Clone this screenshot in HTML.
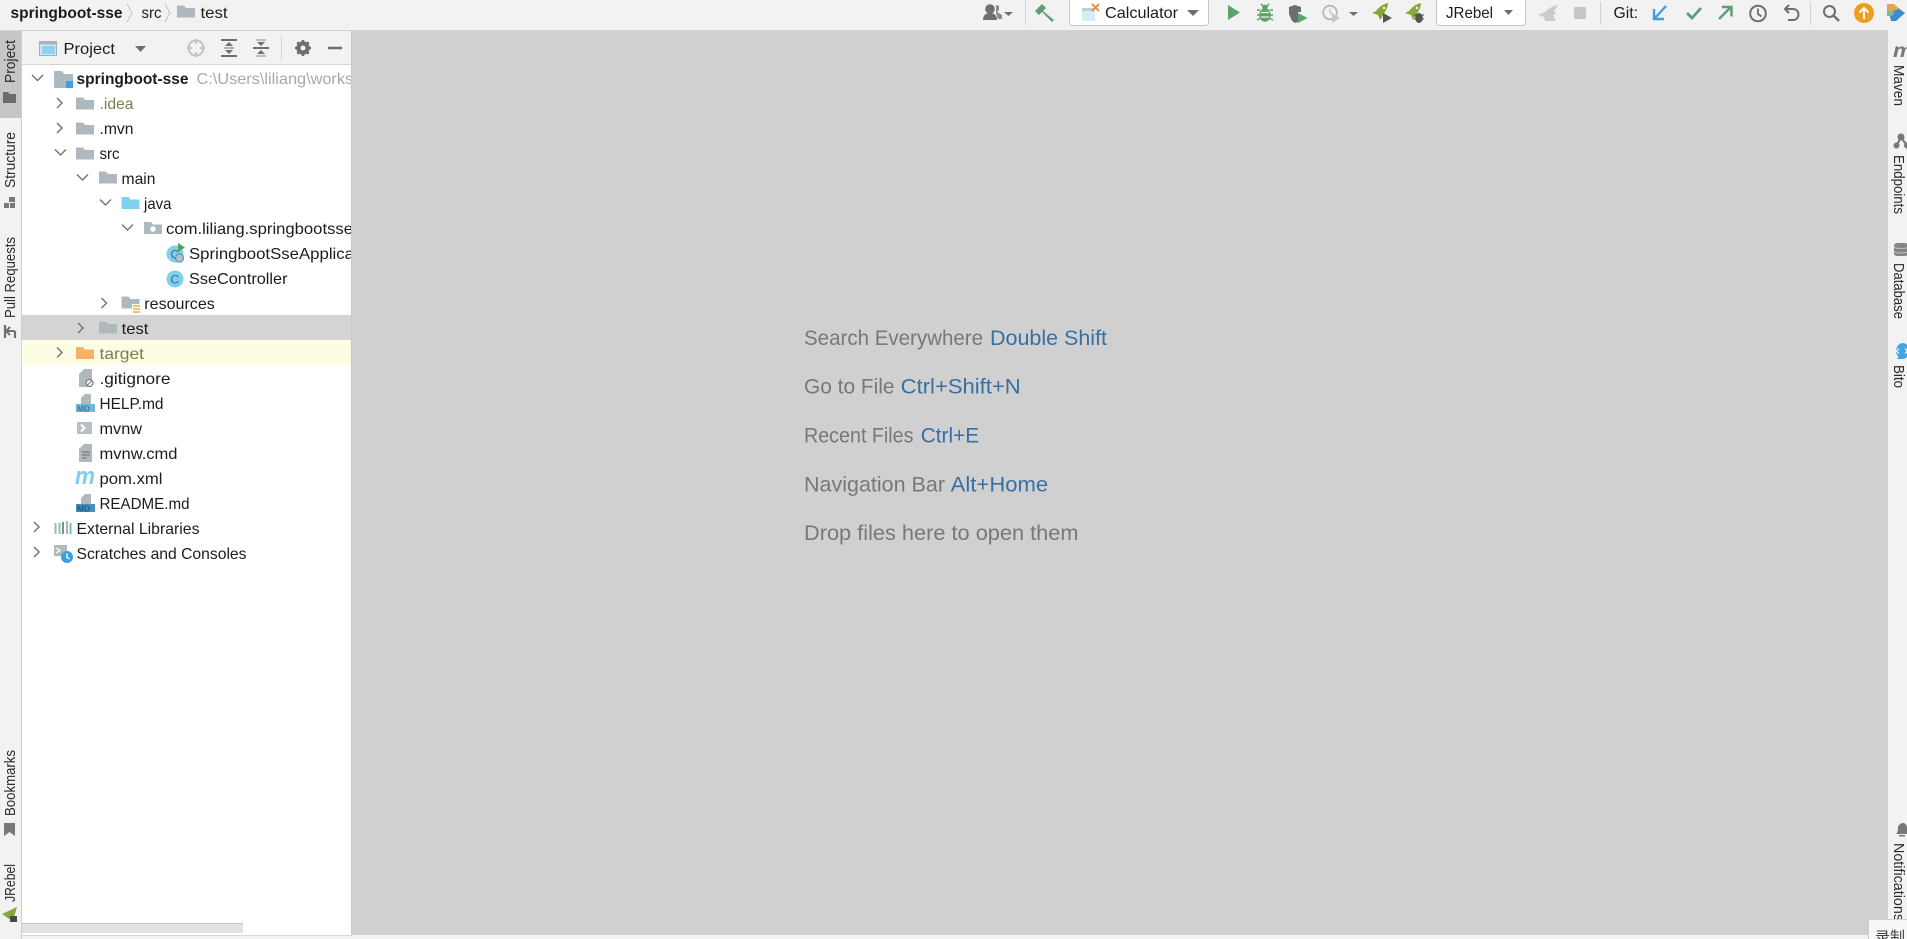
<!DOCTYPE html>
<html lang="en"><head><meta charset="utf-8"><title>springboot-sse</title>
<style>
html,body{margin:0;padding:0;background:#f2f2f2;overflow:hidden;width:1907px;height:939px}
svg{display:block}
text{font-family:"Liberation Sans","Noto Sans CJK SC",sans-serif;font-size:16px;fill:#1c1c1c}
.w{font-size:21px;fill:#787878}.b{font-size:21px;fill:#3a6fa3}
.r{font-size:14.5px;fill:#2a2a2a}
</style></head><body>
<svg width="1907" height="939" viewBox="0 0 1907 939" xmlns="http://www.w3.org/2000/svg">
<defs>
<clipPath id="pc"><rect x="22" y="66" width="329" height="860"/></clipPath>
<path id="f" d="M0 0h7l2 2.500h9v9.500H0z"/>
<path id="dn" d="M0 0l5.500 5.500L11 0" fill="none" stroke="#777" stroke-width="1.500"/>
<path id="rt" d="M0 0l5 5-5 5" fill="none" stroke="#777" stroke-width="1.500"/>
</defs>
<rect width="1907" height="939" fill="#f2f2f2"/>
<!-- editor -->
<rect x="352" y="31" width="1536" height="908" fill="#d0d0d0"/>
<rect x="0" y="30" width="1888" height="1" fill="#d2d2d2"/>
<!-- panel -->
<rect x="22" y="31" width="329" height="904" fill="#fff"/>
<rect x="22" y="31" width="329" height="34" fill="#f2f2f2"/>
<rect x="22" y="64" width="329" height="1" fill="#d4d4d4"/>
<rect x="21" y="31" width="1" height="908" fill="#cfcfcf"/>
<rect x="351" y="31" width="1" height="908" fill="#c8c8c8"/>
<rect x="0" y="31" width="21" height="87" fill="#c6c6c6"/>
<rect x="22" y="315" width="329" height="25" fill="#d4d4d4"/>
<rect x="22" y="340" width="329" height="25" fill="#fdfce4"/>
<rect x="22" y="923" width="221" height="10" fill="#e2e2e2"/>
<rect x="22" y="923" width="221" height="1" fill="#c9c9c9"/>
<rect x="22" y="935" width="1866" height="4" fill="#f2f2f2"/>
<rect x="22" y="935" width="330" height="1" fill="#d8d8d8"/>

<!-- breadcrumbs -->
<text x="10.500" y="18" textLength="112" lengthAdjust="spacingAndGlyphs" font-weight="700">springboot-sse</text>
<path d="M127 4l5 9-5 9" fill="none" stroke="#c4c4c4"/>
<text x="141.500" y="18" textLength="20" lengthAdjust="spacingAndGlyphs">src</text>
<path d="M165 4l5 9-5 9" fill="none" stroke="#c4c4c4"/>
<use href="#f" x="177" y="5.500" fill="#aeb8bf"/>
<text x="200.500" y="18" textLength="27" lengthAdjust="spacingAndGlyphs">test</text>

<!-- project header -->
<rect x="39.500" y="41.500" width="17" height="14" fill="#cfe8f4" stroke="#9fb0b8"/><rect x="39.500" y="41.500" width="17" height="3" fill="#aab5bb"/><rect x="42" y="46" width="13" height="8" fill="#8fd0ee"/>
<text x="63.500" y="54" textLength="51.500" lengthAdjust="spacingAndGlyphs">Project</text>
<path d="M135 46h11l-5.500 6z" fill="#6e6e6e"/>
<circle cx="196" cy="48" r="7.500" fill="none" stroke="#c4c4c4" stroke-width="2"/><path d="M196 39v5M196 52v5M187 48h5M200 48h5" stroke="#c4c4c4" stroke-width="2"/>
<path d="M221 40h16M221 56h16" stroke="#6e6e6e" stroke-width="2"/><path d="M229 42l-4 4h8zM229 54l-4-4h8z" fill="#6e6e6e"/><path d="M224 48h10" stroke="#6e6e6e"/>
<path d="M253 48h16" stroke="#6e6e6e" stroke-width="2"/><path d="M261 46l-4-4h8zM261 50l-4 4h8z" fill="#6e6e6e"/><path d="M256 40h10M256 56h10" stroke="#8a8a8a"/>
<rect x="281" y="36" width="1" height="24" fill="#d4d4d4"/>
<circle cx="303" cy="48" r="5" fill="none" stroke="#6e6e6e" stroke-width="3.500"/><path d="M303 40v16M295 48h16M297.300 42.300l11.400 11.400M308.700 42.300l-11.400 11.400" stroke="#6e6e6e" stroke-width="2.500"/><circle cx="303" cy="48" r="2.500" fill="#f2f2f2"/>
<path d="M328 48h14" stroke="#6e6e6e" stroke-width="2.500"/>

<!-- tree -->
<g clip-path="url(#pc)">
<use href="#dn" x="32" y="75"/>
<path d="M54 71h8l2 3h9v7h-7v7H54z" fill="#aeb8bf"/><rect x="66" y="81" width="7" height="7" fill="#3d9fe0"/>
<text x="76.500" y="84" textLength="112" lengthAdjust="spacingAndGlyphs" font-weight="700">springboot-sse</text>
<text x="196.500" y="84" textLength="192" lengthAdjust="spacingAndGlyphs" style="fill:#a8a8a8">C:\Users\liliang\workspace</text>

<use href="#rt" x="57" y="98"/><use href="#f" x="76" y="97.500" fill="#aeb8bf"/><text x="99.500" y="109" textLength="34" lengthAdjust="spacingAndGlyphs" style="fill:#7d7d4e">.idea</text>
<use href="#rt" x="57" y="123"/><use href="#f" x="76" y="122.500" fill="#aeb8bf"/><text x="99.500" y="134" textLength="34" lengthAdjust="spacingAndGlyphs">.mvn</text>
<use href="#dn" x="55" y="149.500"/><use href="#f" x="76" y="147.500" fill="#aeb8bf"/><text x="99.500" y="159" textLength="20" lengthAdjust="spacingAndGlyphs">src</text>
<use href="#dn" x="77" y="174.500"/><use href="#f" x="99" y="171.500" fill="#aeb8bf"/><text x="121.500" y="184" textLength="34" lengthAdjust="spacingAndGlyphs">main</text>
<use href="#dn" x="100" y="199.500"/><use href="#f" x="121.500" y="197" fill="#82d0f0"/><text x="144" y="209" textLength="27.500" lengthAdjust="spacingAndGlyphs">java</text>
<use href="#dn" x="122" y="224.500"/><use href="#f" x="144" y="222" fill="#aeb8bf"/><circle cx="153" cy="229" r="2.800" fill="#fff"/><text x="166" y="234" textLength="187" lengthAdjust="spacingAndGlyphs">com.liliang.springbootsse</text>

<circle cx="175" cy="254" r="8.500" fill="#80cfec"/><text x="170.500" y="258.500" style="font-size:12px;fill:#3f6a84">C</text><path d="M178 243l7 4.500-7 4.500z" fill="#4fa560"/><circle cx="179.500" cy="258" r="4" fill="#a9c6d6" stroke="#6b8ea3" stroke-width="1.200"/>
<text x="189" y="259" textLength="192" lengthAdjust="spacingAndGlyphs">SpringbootSseApplication</text>
<circle cx="175" cy="279" r="8.500" fill="#80cfec"/><text x="170.500" y="283.500" style="font-size:12px;fill:#3f6a84">C</text>
<text x="189" y="284" textLength="98.500" lengthAdjust="spacingAndGlyphs">SseController</text>

<use href="#rt" x="101.500" y="298"/><use href="#f" x="121.500" y="296.500" fill="#aeb8bf"/><rect x="132" y="304" width="9" height="10" fill="#fff"/><path d="M133 306h7M133 309h7M133 312h7" stroke="#efb75e" stroke-width="1.800"/><text x="144.300" y="309" textLength="70.500" lengthAdjust="spacingAndGlyphs">resources</text>
<use href="#rt" x="78" y="323"/><use href="#f" x="99" y="321.500" fill="#aeb8bf"/><text x="121.700" y="334" textLength="26.700" lengthAdjust="spacingAndGlyphs">test</text>
<use href="#rt" x="57" y="347.500"/><use href="#f" x="76" y="347" fill="#f7b267"/><text x="99.500" y="359" textLength="44.500" lengthAdjust="spacingAndGlyphs" style="fill:#7d7d4e">target</text>

<path d="M84 369h8v11l-4 7h-9V374z" fill="#b1b9bd"/><circle cx="89.500" cy="383" r="3.500" fill="#fff" stroke="#777" stroke-width="1.200"/><path d="M87 385.500l5-5" stroke="#777"/>
<text x="99.500" y="384" textLength="71" lengthAdjust="spacingAndGlyphs">.gitignore</text>
<path d="M85 394h6v10H81v-6z" fill="#b1b9bd"/><rect x="76" y="404" width="19" height="8" fill="#76b7d4"/><text x="77" y="411.500" textLength="13" lengthAdjust="spacingAndGlyphs" style="font-size:8.500px;font-weight:700;fill:#3d7f9f">MD</text>
<text x="99.500" y="409" textLength="64" lengthAdjust="spacingAndGlyphs">HELP.md</text>
<rect x="77" y="422" width="15" height="12" fill="#b9c0c4"/><path d="M81 424.500l3.500 3.500-3.500 3.500" fill="none" stroke="#fff" stroke-width="2"/>
<text x="99.500" y="434" textLength="42.500" lengthAdjust="spacingAndGlyphs">mvnw</text>
<path d="M84 444h8v18H79V449z" fill="#b1b9bd"/><path d="M82 452h8M82 455h8M82 458h5" stroke="#6d6d6d"/>
<text x="99.500" y="459" textLength="78" lengthAdjust="spacingAndGlyphs">mvnw.cmd</text>
<text x="75" y="484" textLength="20" lengthAdjust="spacingAndGlyphs" style="font-size:24px;font-style:italic;font-weight:700;fill:#80cdec">m</text>
<text x="99.500" y="484" textLength="63" lengthAdjust="spacingAndGlyphs">pom.xml</text>
<path d="M85 494h6v10H81v-6z" fill="#b1b9bd"/><rect x="76" y="504" width="19" height="8" fill="#4591b8"/><text x="77" y="511.500" textLength="13" lengthAdjust="spacingAndGlyphs" style="font-size:8.500px;font-weight:700;fill:#1f5f85">MD</text>
<text x="99.500" y="509" textLength="90" lengthAdjust="spacingAndGlyphs">README.md</text>

<use href="#rt" x="34" y="522"/>
<path d="M55.500 523v11M59.500 523v11M67 521v13" stroke="#a9b3b8" stroke-width="2"/><path d="M63 522v12" stroke="#6aa07d" stroke-width="2"/><path d="M70.500 523v11" stroke="#7ab6d8" stroke-width="2"/>
<text x="76.500" y="534" textLength="123" lengthAdjust="spacingAndGlyphs">External Libraries</text>
<use href="#rt" x="34" y="547"/>
<rect x="54" y="545" width="13" height="11" fill="#b1b9bd"/><path d="M56 548l4 2.500-4 2.500" fill="none" stroke="#fff" stroke-width="1.300"/>
<circle cx="67" cy="557" r="6" fill="#3d9fe0"/><path d="M67 553.500V557.500l2.500 1.500" fill="none" stroke="#fff" stroke-width="1.300"/>
<text x="76.500" y="559" textLength="170" lengthAdjust="spacingAndGlyphs">Scratches and Consoles</text>
</g>

<!-- left stripe -->
<text class="r" transform="translate(15,83) rotate(-90)" textLength="43" lengthAdjust="spacingAndGlyphs">Project</text>
<path d="M3 92h5l2 2h6v9H3z" fill="#6b6b6b"/>
<text class="r" transform="translate(15,188) rotate(-90)" textLength="56" lengthAdjust="spacingAndGlyphs">Structure</text>
<path d="M9 197h6v5H9zM4 203h5v5H4zM10 203h5v5h-5z" fill="#787878"/>
<text class="r" transform="translate(15,318) rotate(-90)" textLength="81" lengthAdjust="spacingAndGlyphs">Pull Requests</text>
<path d="M5 325v13M15 331v7" stroke="#6f6f6f" stroke-width="2.200" fill="none"/><path d="M15 331H7M10 327l-4 4 4 4" stroke="#6f6f6f" stroke-width="2" fill="none"/>
<text class="r" transform="translate(15,816) rotate(-90)" textLength="66" lengthAdjust="spacingAndGlyphs">Bookmarks</text>
<path d="M4 823h11v13l-5.500-4-5.500 4z" fill="#777"/>
<text class="r" transform="translate(15,902) rotate(-90)" textLength="38" lengthAdjust="spacingAndGlyphs">JRebel</text>
<path d="M2 914l15-7-3 10-5 2z" fill="#86a83a"/><rect x="10" y="916" width="7" height="6" fill="#4a4a4a"/>

<!-- toolbar -->
<circle cx="990" cy="9" r="4.800" fill="#6e6e6e"/><path d="M983 20c0-5 3-7 7-7s7 2 7 7z" fill="#6e6e6e"/><path d="M996 5l3 1v4l-2 2 5 3v4h-4l-2-6z" fill="#8a8a8a"/><path d="M1004 12h9l-4.500 4z" fill="#6e6e6e"/>
<rect x="1025" y="0" width="1" height="25" fill="#d6d6d6"/>
<path d="M1035 11l7-7 4 4-3 3 11 9-2 2-10-10-3 3z" fill="#5f9e6e"/>
<rect x="1069.500" y="-2" width="139" height="27.500" rx="3" fill="#fff" stroke="#c6c6c6"/>
<rect x="1082" y="8" width="13" height="13" fill="#d4ecf4"/><rect x="1082" y="8" width="13" height="3" fill="#c4ccd0"/><path d="M1092 4l7 7M1099 4l-7 7" stroke="#e8893a" stroke-width="1.800"/>
<text x="1105" y="18" textLength="73" lengthAdjust="spacingAndGlyphs">Calculator</text>
<path d="M1187 10h12l-6 6z" fill="#6e6e6e"/>
<path d="M1228 5l12 7.500-12 7.500z" fill="#5aa469"/>
<!-- bug -->
<ellipse cx="1265" cy="15" rx="5.800" ry="6.800" fill="#5aa469"/><circle cx="1265" cy="7.500" r="2.800" fill="#5aa469"/>
<path d="M1261 4l2 2M1269 4l-2 2M1257 10h3M1270 10h3M1257 15h3M1270 15h3M1257 20l3-1.500M1273 20l-3-1.500" stroke="#5aa469" stroke-width="1.500"/>
<path d="M1261 12.500h8M1261 17h8" stroke="#f2f2f2" stroke-width="1.300"/>
<!-- coverage -->
<path d="M1289 7l6-2 6 2v5h-3v10l-3 1-3-2-3-7z" fill="#6e6e6e"/><path d="M1294 8v10" stroke="#f2f2f2" stroke-width="0"/>
<path d="M1298 13l9.500 5-9.500 5z" fill="#5aa469"/>
<!-- profile -->
<circle cx="1330" cy="12.500" r="6.800" fill="none" stroke="#b8b8b8" stroke-width="1.800"/><path d="M1330 8.500v4l2 2" fill="none" stroke="#b8b8b8"/><path d="M1332 13l8 5-8 5z" fill="#c8c8c8"/><path d="M1349 12h9l-4.500 4z" fill="#6e6e6e"/>
<!-- rockets -->
<path d="M1388 3c-5 1-9 4-12 8l-4 2 6 2 2 5 2-3 2-3c2-4 4-7 4-11z" fill="#86a83a"/><circle cx="1384" cy="8" r="1.200" fill="#f2f2f2"/><path d="M1383 13l9 5-9 5z" fill="#555"/>
<path d="M1421 3c-5 1-9 4-12 8l-4 2 6 2 2 5 2-3 2-3c2-4 4-7 4-11z" fill="#86a83a"/><circle cx="1417" cy="8" r="1.200" fill="#f2f2f2"/><ellipse cx="1419" cy="18" rx="3.800" ry="5" fill="#555"/><path d="M1414 15h10M1414 19h10" stroke="#555"/>
<rect x="1436.500" y="-2" width="89" height="27.500" rx="3" fill="#fff" stroke="#c6c6c6"/>
<text x="1446" y="18" textLength="47" lengthAdjust="spacingAndGlyphs">JRebel</text>
<path d="M1504 10h9l-4.500 5z" fill="#6e6e6e"/>
<path d="M1558 5c-6 1-10 4-13 7l-7 3 6 2 1 4h11l-3-6 3-2-2-2z" fill="#cbcbcb"/>
<rect x="1574" y="7" width="12" height="12" fill="#c6c6c6"/>
<rect x="1600" y="2" width="1" height="23" fill="#d0d0d0"/>
<text x="1613.500" y="18" textLength="24.500" lengthAdjust="spacingAndGlyphs">Git:</text>
<path d="M1666 6l-11 12M1654 9v10h10" fill="none" stroke="#3d9fe0" stroke-width="2.400"/>
<path d="M1687 13l5 5 9-10" fill="none" stroke="#5c9e70" stroke-width="2.800"/>
<path d="M1719 19l12-12M1722 7h9.500v9.500" fill="none" stroke="#5c9e70" stroke-width="2.400"/>
<circle cx="1758" cy="13.500" r="7.800" fill="none" stroke="#6e6e6e" stroke-width="2"/><path d="M1758 8.500v5.500l3.500 2.500" fill="none" stroke="#6e6e6e" stroke-width="1.800"/>
<path d="M1789 5l-4 4 4 4" fill="none" stroke="#6e6e6e" stroke-width="2"/><path d="M1786 9h7c3.500 0 5.500 2.500 5.500 5.500s-2 5.500-5.500 5.500h-5" fill="none" stroke="#6e6e6e" stroke-width="2"/>
<rect x="1810" y="2" width="1" height="23" fill="#d0d0d0"/>
<circle cx="1829.500" cy="11.500" r="5.500" fill="none" stroke="#6e6e6e" stroke-width="2"/><path d="M1834 16l5 5" stroke="#6e6e6e" stroke-width="2.400"/>
<circle cx="1864" cy="13" r="10" fill="#eb9e20"/><path d="M1864 19v-11M1859.500 12.500l4.500-4.500 4.500 4.500" fill="none" stroke="#fff" stroke-width="2"/>

<!-- right stripe -->
<rect x="1888" y="31" width="19" height="908" fill="#f2f2f2"/>
<path d="M1887 4h6l12 9-9 8h-5z" fill="#3d8ccc"/><path d="M1887 4h7l5 5-8 3-4-1z" fill="#e0a84e"/><path d="M1887 11l8 1-3 4h-5z" fill="#7cb7a6"/>
<text x="1893" y="57" textLength="20" lengthAdjust="spacingAndGlyphs" style="font-size:19px;font-style:italic;font-weight:700;fill:#777">m</text>
<text class="r" transform="translate(1894,65) rotate(90)" textLength="41" lengthAdjust="spacingAndGlyphs">Maven</text>
<circle cx="1901" cy="137" r="3.500" fill="#777"/><circle cx="1896.500" cy="145.500" r="3" fill="#777"/><circle cx="1907" cy="145.500" r="3" fill="#777"/><path d="M1896.500 145.500l4.500-8 6 8" fill="none" stroke="#777" stroke-width="2"/>
<text class="r" transform="translate(1894,155) rotate(90)" textLength="59" lengthAdjust="spacingAndGlyphs">Endpoints</text>
<rect x="1894" y="243" width="14" height="13" rx="3" fill="#858585"/><path d="M1894 247c2 2 12 2 14 0M1894 251.500c2 2 12 2 14 0" fill="none" stroke="#c0c0c0" stroke-width="1"/>
<text class="r" transform="translate(1894,263) rotate(90)" textLength="56" lengthAdjust="spacingAndGlyphs">Database</text>
<path d="M1902 343a8 8 0 0 1 0 16h-5l1.500-2.500a8 8 0 0 1 3.500-13.500z" fill="#3fa6e8"/><path d="M1899 348.500l-2.500 2.500 2.500 2.500M1905 348.500l2.500 2.500-2.500 2.500" fill="none" stroke="#fff" stroke-width="1.200"/>
<text class="r" transform="translate(1894,365) rotate(90)" textLength="23" lengthAdjust="spacingAndGlyphs">Bito</text>
<path d="M1896 834c2-2 2-4 2-6 0-3 3-5 5-5s4 2 4 5v6z" fill="#777"/><rect x="1899" y="835" width="6" height="1.500" fill="#777"/>
<text class="r" transform="translate(1894,843) rotate(90)" textLength="78" lengthAdjust="spacingAndGlyphs">Notifications</text>

<!-- popup -->
<rect x="1868.500" y="919.500" width="40" height="22" fill="#f7f7f7" stroke="#cfcfcf"/>
<text x="1875" y="942" style="font-size:15px;fill:#444">录制</text>

<!-- welcome -->
<text class="w" x="804" y="345" textLength="179" lengthAdjust="spacingAndGlyphs">Search Everywhere</text>
<text class="b" x="990" y="345" textLength="117" lengthAdjust="spacingAndGlyphs">Double Shift</text>
<text class="w" x="804" y="393.500" textLength="90.500" lengthAdjust="spacingAndGlyphs">Go to File</text>
<text class="b" x="900.700" y="393.500" textLength="120" lengthAdjust="spacingAndGlyphs">Ctrl+Shift+N</text>
<text class="w" x="804" y="442.500" textLength="109.500" lengthAdjust="spacingAndGlyphs">Recent Files</text>
<text class="b" x="920.700" y="442.500" textLength="58.500" lengthAdjust="spacingAndGlyphs">Ctrl+E</text>
<text class="w" x="804" y="491.500" textLength="141" lengthAdjust="spacingAndGlyphs">Navigation Bar</text>
<text class="b" x="950.700" y="491.500" textLength="97.500" lengthAdjust="spacingAndGlyphs">Alt+Home</text>
<text class="w" x="804" y="540" textLength="274.500" lengthAdjust="spacingAndGlyphs">Drop files here to open them</text>
</svg>
</body></html>
